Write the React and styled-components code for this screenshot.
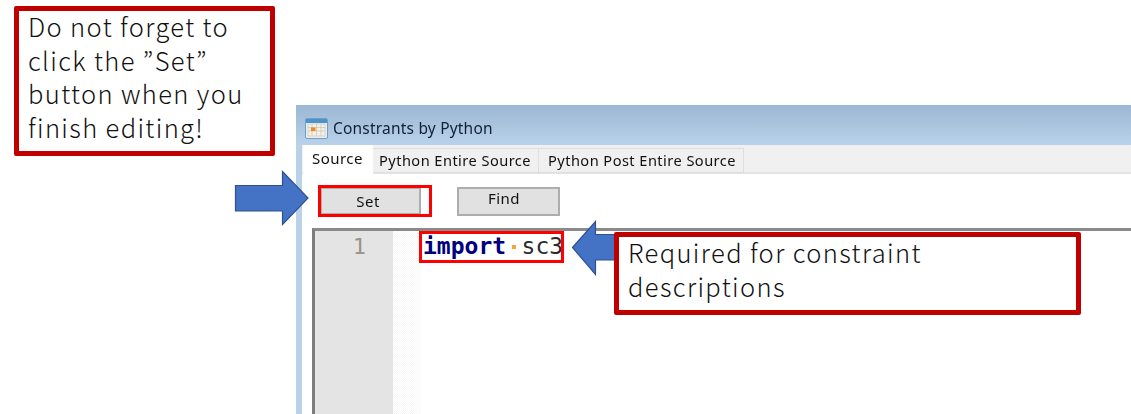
import React from "react";
import styled, { createGlobalStyle } from "styled-components";

const Global = createGlobalStyle`
  html, body { margin: 0; padding: 0; background: #fff; }
  #root { width: 1131px; height: 414px; overflow: hidden; }
`;

const Canvas = styled.div`
  position: relative;
  width: 1131px;
  height: 414px;
  overflow: hidden;
  background: #fff;
  padding: 105px 0 0 296px;
  box-sizing: border-box;
`;

const Callout = styled.div`
  position: absolute;
  left: ${(p) => p.$x}px;
  top: ${(p) => p.$y}px;
  width: ${(p) => p.$w}px;
  height: ${(p) => p.$h}px;
  box-sizing: border-box;
  border: 5px solid #c00000;
  border-radius: 2px;
  background: #fff;
  padding-left: 9px;
  font-family: "Noto Sans CJK JP", "Noto Sans", sans-serif;
  font-weight: 300;
  font-size: 25.5px;
  line-height: 33.5px;
  letter-spacing: 1.37px;
  color: #111;
  z-index: 3;
`;

const Lines = styled.div`
  margin-top: -2px;
`;

const Line = styled.div`
  white-space: nowrap;
`;

const Arrow = styled.svg`
  position: absolute;
  left: ${(p) => p.$x}px;
  top: ${(p) => p.$y}px;
  z-index: 2;
`;

const Window = styled.div`
  height: 309px;
  display: flex;
  flex-direction: column;
  padding-left: 6px;
  background: linear-gradient(#9cb7d3 0, #b9d2ea 40px, #b9d2ea 100%);
`;

const TitleBar = styled.div`
  height: 40px;
  flex: none;
  margin-left: -6px;
  display: flex;
  align-items: center;
  gap: 5px;
  padding: 6px 0 0 9px;
  box-sizing: border-box;
  font-family: "Noto Sans", "Open Sans", sans-serif;
  font-size: 15.5px;
  letter-spacing: 0.2px;
  color: #10203a;
  filter: blur(0.3px);
`;

const Body = styled.div`
  flex: 1;
  min-height: 0;
  background: #fff;
  display: flex;
  flex-direction: column;
`;

const TabStrip = styled.div`
  height: 29px;
  flex: none;
  box-sizing: border-box;
  background: #f0f0f0;
  border-bottom: 2px solid #e4e4e4;
  padding-left: 1px;
  display: flex;
  align-items: flex-end;
  font-family: "Noto Sans", "Open Sans", sans-serif;
  font-size: 14.6px;
  letter-spacing: 0.45px;
  color: #111;
`;

const Tab = styled.div`
  box-sizing: border-box;
  width: ${(p) => p.$w}px;
  height: ${(p) => (p.$active ? 29 : 25)}px;
  margin-bottom: ${(p) => (p.$active ? -2 : -1)}px;
  background: ${(p) => (p.$active ? "#fff" : "#f0f0f0")};
  border: ${(p) => (p.$active ? "none" : "1px solid #dedede")};
  border-left: none;
  padding-left: ${(p) => p.$pad}px;
  padding-top: ${(p) => (p.$active ? 2 : 0)}px;
  line-height: 22px;
  white-space: nowrap;
  font-size: ${(p) => (p.$active ? "15px" : "inherit")};
  span { filter: blur(0.3px); display: inline-block; }
`;

const Toolbar = styled.div`
  flex: none;
  height: 54px;
  display: flex;
  align-items: flex-start;
  gap: 36px;
  padding: 13px 0 0 18px;
  box-sizing: border-box;
`;

const Button = styled.div`
  position: relative;
  box-sizing: border-box;
  width: ${(p) => p.$w}px;
  height: ${(p) => p.$h}px;
  background: #e1e1e1;
  border: 2px solid #adadad;
  display: flex;
  align-items: center;
  justify-content: center;
  font-family: "Noto Sans", "Open Sans", sans-serif;
  font-size: 15px;
  letter-spacing: 0.5px;
  color: #111;
  span {
    filter: blur(0.3px);
    margin-right: ${(p) => p.$nudge}px;
    margin-top: ${(p) => p.$lift}px;
  }
`;

const Highlight = styled.div`
  position: absolute;
  left: ${(p) => p.$x}px;
  top: ${(p) => p.$y}px;
  width: ${(p) => p.$w}px;
  height: ${(p) => p.$h}px;
  box-sizing: border-box;
  border: 3px solid #ff0000;
  z-index: 1;
`;

const Editor = styled.div`
  flex: 1;
  min-height: 0;
  margin-left: 10px;
  display: flex;
  border-top: 3px solid #8a8a8a;
  border-left: 3px solid #7d7d7d;
  background: #fff;
`;

const Gutter = styled.div`
  width: 78px;
  flex: none;
  background: #e4e4e4;
  box-sizing: border-box;
  text-align: right;
  padding: 1px 27px 0 0;
  font-family: "DejaVu Sans Mono", monospace;
  font-size: 22px;
  line-height: 30px;
  color: #9a9488;
`;

const FoldMargin = styled.div`
  width: 28px;
  flex: none;
  background: repeating-conic-gradient(#f8f8f8 0 25%, #ffffff 0 50%) 0 0 / 2px 2px;
`;

const Code = styled.div`
  position: relative;
  flex: 1;
  padding: 0 0 0 2px;
  font-family: "DejaVu Sans Mono", monospace;
  font-size: 23px;
  line-height: 30px;
  white-space: pre;
  color: #2a2a30;
`;

const Keyword = styled.span`
  color: #00007f;
  font-weight: 700;
`;

const Space = styled.span`
  display: inline-block;
  width: 15.5px;
  position: relative;
  height: 1px;
  &::after {
    content: "";
    position: absolute;
    left: 6px;
    top: -8px;
    width: 4px;
    height: 4px;
    background: #f2a63c;
  }
`;

const CalendarIcon = () => (
  <svg width="23" height="21" viewBox="0 0 23 21" style={{ flex: "none" }}>
    <rect x="0.5" y="0.5" width="22" height="20" rx="1.5" fill="#e9eef4" stroke="#6f9fc6" />
    <rect x="1" y="1" width="21" height="4" fill="#4d93c9" />
    <rect x="3" y="6" width="17" height="12" fill="#f5f1e6" stroke="#c9c3b4" strokeWidth="0.6" />
    <path d="M3 9.5h17M3 13h17M7 6v12M11.5 6v12M16 6v12" stroke="#c9c3b4" strokeWidth="0.7" />
    <rect x="6" y="9.5" width="4.5" height="3.5" fill="#f08a1d" />
  </svg>
);

export default function App() {
  return (
    <>
      <Global />
      <Canvas>
        <Window>
          <TitleBar>
            <CalendarIcon />
            <span>Constrants by Python</span>
          </TitleBar>
          <Body>
            <TabStrip>
              <Tab $active $w={70} $pad={9}><span>Source</span></Tab>
              <Tab $w={166} $pad={6}><span>Python Entire Source</span></Tab>
              <Tab $w={205} $pad={9}><span>Python Post Entire Source</span></Tab>
            </TabStrip>
            <Toolbar>
              <Button $w={101} $h={28} $nudge={5} $lift={0}>
                <span>Set</span>
                <Highlight $x={-4} $y={-4} $w={114} $h={32} />
              </Button>
              <Button $w={103} $h={29} $nudge={9} $lift={-8}><span>Find</span></Button>
            </Toolbar>
            <Editor>
              <Gutter>1</Gutter>
              <FoldMargin />
              <Code>
                <Keyword>import</Keyword><Space />sc3
                <Highlight $x={-2} $y={0} $w={145} $h={32} />
              </Code>
            </Editor>
          </Body>
        </Window>

        <Callout $x={14} $y={6} $w={261} $h={150}>
          <Lines>
            <Line>Do not forget to</Line>
            <Line>click the ”Set”</Line>
            <Line>button when you</Line>
            <Line>finish editing!</Line>
          </Lines>
        </Callout>

        <Callout $x={614} $y={232} $w={467} $h={83}>
          <Lines>
            <Line>Required for constraint</Line>
            <Line>descriptions</Line>
          </Lines>
        </Callout>

        <Arrow $x={234} $y={170} width="76" height="56" viewBox="0 0 76 56">
          <path d="M1.5 15.5H48.5V1.5L74 28L48.5 54.5V41H1.5Z" fill="#4472c4" stroke="#2f528f" strokeWidth="1.2" />
        </Arrow>
        <Arrow $x={571} $y={220} width="46" height="56" viewBox="0 0 46 56">
          <path d="M1.5 27.5L24.5 1.5V14.5H46V40H24.5V54.5Z" fill="#4472c4" stroke="#2f528f" strokeWidth="1.2" />
        </Arrow>
      </Canvas>
    </>
  );
}
